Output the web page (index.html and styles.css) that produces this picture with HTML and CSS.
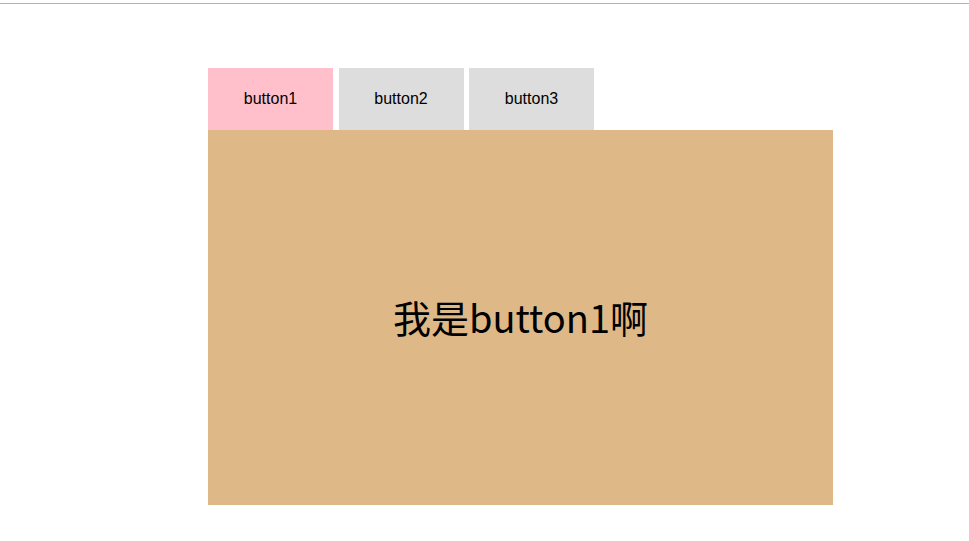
FILE: index.html
```html
<!DOCTYPE html>
<html lang="zh-CN">
<head>
    <meta charset="UTF-8">
    <title>tab</title>
    <link rel="stylesheet" href="styles.css">
</head>
<body>

<div class="top-line"></div>

<div class="tab-box">
    <div class="tab-btns">
        <div class="tab-btn active">button1</div>
        <div class="tab-btn">button2</div>
        <div class="tab-btn">button3</div>
    </div>
    <div class="tab-content">我是button1啊</div>
</div>

</body>
</html>
```

FILE: styles.css
```css
body {
    margin: 0;
    font-family: "Liberation Sans", Arial, sans-serif;
    background-color: #fff;
}

.top-line {
    margin-top: 3px;
    height: 1px;
    background-color: #b4b4b4;
}

.tab-box {
    width: 625px;
    margin-top: 64px;
    margin-left: 208px;
}

.tab-btns {
    display: flex;
    gap: 5.5px;
}

.tab-btn {
    width: 125px;
    height: 62px;
    line-height: 62px;
    text-align: center;
    font-size: 16px;
    color: #000;
    background-color: #ddd;
}

.tab-btn.active {
    background-color: pink;
}

.tab-content {
    height: 372px;
    padding-bottom: 3px;
    display: flex;
    align-items: center;
    justify-content: center;
    background-color: burlywood;
    font-family: "Noto Sans CJK SC", sans-serif;
    font-size: 38px;
    color: #000;
}
```
